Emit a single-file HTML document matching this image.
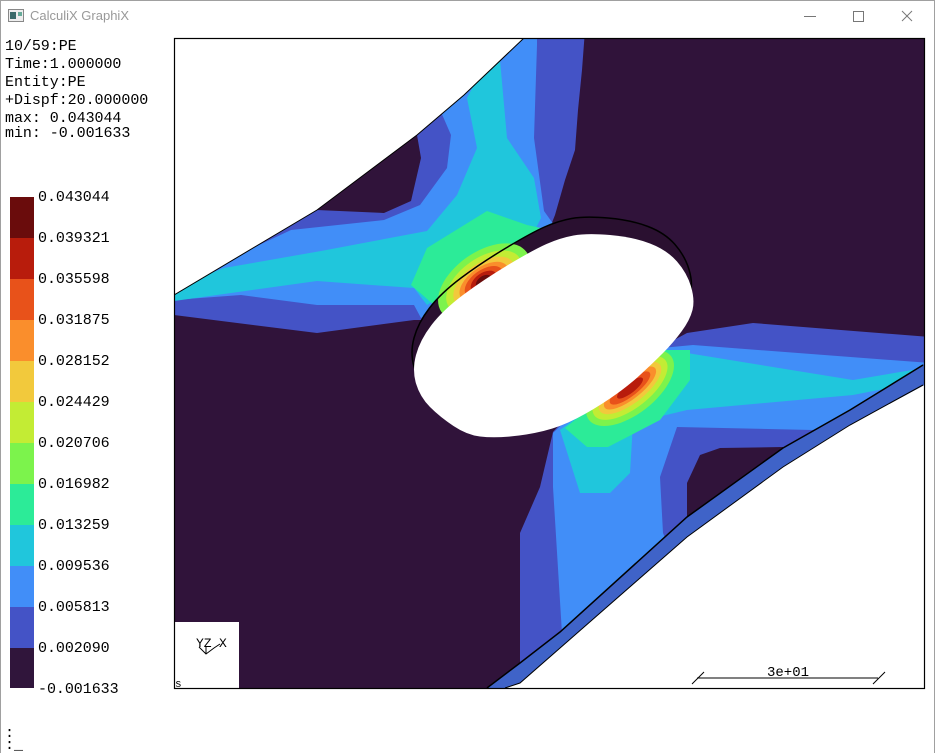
<!DOCTYPE html>
<html><head><meta charset="utf-8"><style>
html,body{margin:0;padding:0}
body{width:935px;height:754px;background:#fff;position:relative;overflow:hidden;font-family:"Liberation Mono",monospace}
.win{position:absolute;left:0;top:0;width:933px;height:752px;border:1px solid #a0a0a0;border-bottom:none}
.t{position:absolute;font-size:15px;color:#000;white-space:pre;letter-spacing:-0.05px;line-height:15px}
.title{position:absolute;left:30px;top:8px;font:13px "Liberation Sans",sans-serif;color:#999}
.lb{position:absolute;left:10px;width:24px}
</style></head><body>
<div class="win"></div>
<svg style="position:absolute;left:8px;top:9px" width="16" height="14"><rect x="0.5" y="0.5" width="15" height="12" fill="#eee" stroke="#888"/><rect x="2" y="3" width="6" height="7" fill="#3a6a6a"/><rect x="10" y="3" width="4" height="4" fill="#6a9"/></svg>
<div class="title">CalculiX GraphiX</div>
<svg style="position:absolute;left:800px;top:8px" width="120" height="18" stroke="#777" fill="none"><line x1="4" y1="8.5" x2="16" y2="8.5"/><rect x="53.5" y="3.5" width="10" height="10"/><line x1="102" y1="3" x2="112" y2="13"/><line x1="112" y1="3" x2="102" y2="13"/></svg>

<div class="t" style="left:5px;top:39px">10/59:PE</div>
<div class="t" style="left:5px;top:57px">Time:1.000000</div>
<div class="t" style="left:5px;top:75px">Entity:PE</div>
<div class="t" style="left:5px;top:93px">+Dispf:20.000000</div>
<div class="t" style="left:5px;top:111px">max: 0.043044</div>
<div class="t" style="left:5px;top:126px">min: -0.001633</div>

<div class="lb" style="top:197px;height:41px;background:#6a0c0c"></div>
<div class="lb" style="top:238px;height:41px;background:#b81c0c"></div>
<div class="lb" style="top:279px;height:41px;background:#e8521a"></div>
<div class="lb" style="top:320px;height:41px;background:#fa8e2c"></div>
<div class="lb" style="top:361px;height:41px;background:#f2c93c"></div>
<div class="lb" style="top:402px;height:41px;background:#c3ec34"></div>
<div class="lb" style="top:443px;height:41px;background:#7cf34c"></div>
<div class="lb" style="top:484px;height:41px;background:#2ceb98"></div>
<div class="lb" style="top:525px;height:41px;background:#20c6dc"></div>
<div class="lb" style="top:566px;height:41px;background:#418ef8"></div>
<div class="lb" style="top:607px;height:41px;background:#4453c6"></div>
<div class="lb" style="top:648px;height:40px;background:#30153b"></div>
<div class="t" style="left:38px;top:190px">0.043044</div>
<div class="t" style="left:38px;top:231px">0.039321</div>
<div class="t" style="left:38px;top:272px">0.035598</div>
<div class="t" style="left:38px;top:313px">0.031875</div>
<div class="t" style="left:38px;top:354px">0.028152</div>
<div class="t" style="left:38px;top:395px">0.024429</div>
<div class="t" style="left:38px;top:436px">0.020706</div>
<div class="t" style="left:38px;top:477px">0.016982</div>
<div class="t" style="left:38px;top:518px">0.013259</div>
<div class="t" style="left:38px;top:559px">0.009536</div>
<div class="t" style="left:38px;top:600px">0.005813</div>
<div class="t" style="left:38px;top:641px">0.002090</div>
<div class="t" style="left:38px;top:682px">-0.001633</div>
<div class="t" style="left:5px;top:726px">:</div>
<div class="t" style="left:5px;top:738px">:_</div>

<svg style="position:absolute;left:0;top:0" width="935" height="754">
<defs>
<clipPath id="vp"><rect x="175" y="39" width="749" height="649"/></clipPath>
<path id="hole" d="M416,355 Q420,340 431.5,325 Q443,310 463,295 Q483,280 508,265 Q533,250 546.5,244 Q560,238 573.5,235.5 Q587,233 610,235 Q633,237 650,243.5 Q667,250 677,261.5 Q687,273 691,286.5 Q695,300 692.5,310 Q690,320 681.5,331.5 Q673,343 663,353 Q653,363 640,375 Q627,387 610,398.5 Q593,410 576.5,418.5 Q560,427 543.5,431 Q527,435 510,436.5 Q493,438 480,436.5 Q467,435 453.5,426 Q440,417 430,407 Q420,397 416,383.5 Q412,370 416,355 Z"/>
</defs>
<g clip-path="url(#vp)">
<rect x="175" y="39" width="749" height="649" fill="#30133a"/>
<!-- upper arm -->
<polygon fill="#4453c6" points="174,290 317,205 417,130 464,90 524,30 585,30 582,70 578,110 575,150 565,180 555,215 545,240 440,320 414,320 317,333 174,315"/>
<polygon fill="#30133a" points="317,210 417,135 421,158 411,201 384,213"/>
<polygon fill="#418ef8" points="174,285 291,230 384,220 420,205 447,168 451,135 441,112 470,80 530,30 537,30 537,45 534,138 544,211 554,225 520,250 421,318 414,305 317,305 241,295 174,300"/>
<polygon fill="#20c6dc" points="174,288 224,268 321,251 427,231 457,195 477,148 467,98 487,60 500,60 507,138 534,178 541,218 530,240 427,305 414,288 317,281 174,301"/>
<polygon fill="#2ceb98" points="487,211 527,225 541,228 520,265 434,305 411,285 427,248"/>
<!-- lower arm -->
<polygon fill="#4453c6" points="553,432 600,380 687,333 753,323 930,337 930,400 530,700 520,700 520,533 540,487"/>
<polygon fill="#30133a" points="687,483 700,455 720,448 783,447 783,470 687,540"/>
<polygon fill="#418ef8" points="553,433 640,350 693,345 930,363 930,395 813,430 677,427 660,477 663,533 690,600 563,650 553,487"/>
<polygon fill="#20c6dc" points="560,430 600,400 687,353 853,380 930,367 930,380 853,395 687,410 633,423 630,473 610,493 580,493"/>
<polygon fill="#2ceb98" points="565,428 600,400 660,350 690,350 690,380 660,420 608,447 587,447"/>
<!-- hole wall -->
<use href="#hole" transform="translate(-2,-17)" fill="#2a1030"/>
<!-- upper hotspot -->
<g transform="rotate(-35 484 282)">
<ellipse cx="484" cy="282" rx="52" ry="30" fill="#7cf34c"/>
<ellipse cx="484" cy="282" rx="43" ry="24" fill="#c3ec34"/>
<ellipse cx="484" cy="282" rx="35" ry="19" fill="#f2c93c"/>
<ellipse cx="484" cy="282" rx="28" ry="15" fill="#fa8e2c"/>
<ellipse cx="484" cy="282" rx="22" ry="12" fill="#e8521a"/>
<ellipse cx="484" cy="282" rx="15" ry="9" fill="#b81c0c"/>
<ellipse cx="484" cy="282" rx="9" ry="6" fill="#6a0c0c"/>
</g>
<!-- lower hotspot -->
<g transform="rotate(-38 630 388)">
<ellipse cx="630" cy="388" rx="52" ry="26" fill="#7cf34c"/>
<ellipse cx="630" cy="388" rx="45" ry="20" fill="#c3ec34"/>
<ellipse cx="630" cy="388" rx="38" ry="15" fill="#f2c93c"/>
<ellipse cx="630" cy="388" rx="32" ry="11" fill="#fa8e2c"/>
<ellipse cx="630" cy="388" rx="25" ry="8" fill="#e8521a"/>
<ellipse cx="630" cy="388" rx="16" ry="5" fill="#b81c0c"/>
</g>
<use href="#hole" transform="translate(-2,-17)" fill="none" stroke="#000" stroke-width="1.5"/>
<use href="#hole" fill="#fff"/>
<!-- white outside -->
<polygon fill="#fff" points="170,30 524,30 524,38 464,95 417,135 317,210 174,295 170,295"/>
<polygon fill="#3f63c8" points="487,688 520,663 560,632 687,517 783,448 850,410 930,360 930,385 850,425 783,467 687,537 520,683 505,700"/>
<polygon fill="#fff" points="505,688 520,683 687,537 783,467 850,425 930,382 930,700 500,700"/>
<polyline fill="none" stroke="#000" stroke-width="1.5" points="487,688 520,663 560,632 687,517 783,448 850,410 923,365"/>
<polyline fill="none" stroke="#000" stroke-width="1" points="505,688 520,683 687,537 783,467 850,425 923,385"/>
<polyline fill="none" stroke="#000" stroke-width="1" points="174,295 317,210 417,135 464,95 524,38"/>
<!-- axis box -->
<rect x="175" y="622" width="64" height="66" fill="#fff"/>
<text x="196" y="647" font-family="Liberation Mono,monospace" font-size="13">YZ</text>
<text x="219" y="647" font-family="Liberation Mono,monospace" font-size="13">X</text>
<polyline fill="none" stroke="#000" stroke-width="1" points="199,647 206,654 214,648 220,644"/>
<line x1="206" y1="646" x2="206" y2="654" stroke="#000"/>
<text x="175" y="687" font-family="Liberation Mono,monospace" font-size="11">s</text>
<!-- scale -->
<line x1="697" y1="678" x2="878" y2="678" stroke="#000"/>
<line x1="692" y1="684" x2="704" y2="672" stroke="#000"/>
<line x1="873" y1="684" x2="885" y2="672" stroke="#000"/>
<text x="767" y="676" font-family="Liberation Mono,monospace" font-size="14">3e+01</text>
</g>
<rect x="174.5" y="38.5" width="750" height="650" fill="none" stroke="#000" stroke-width="1.2"/>
</svg>
</body></html>
